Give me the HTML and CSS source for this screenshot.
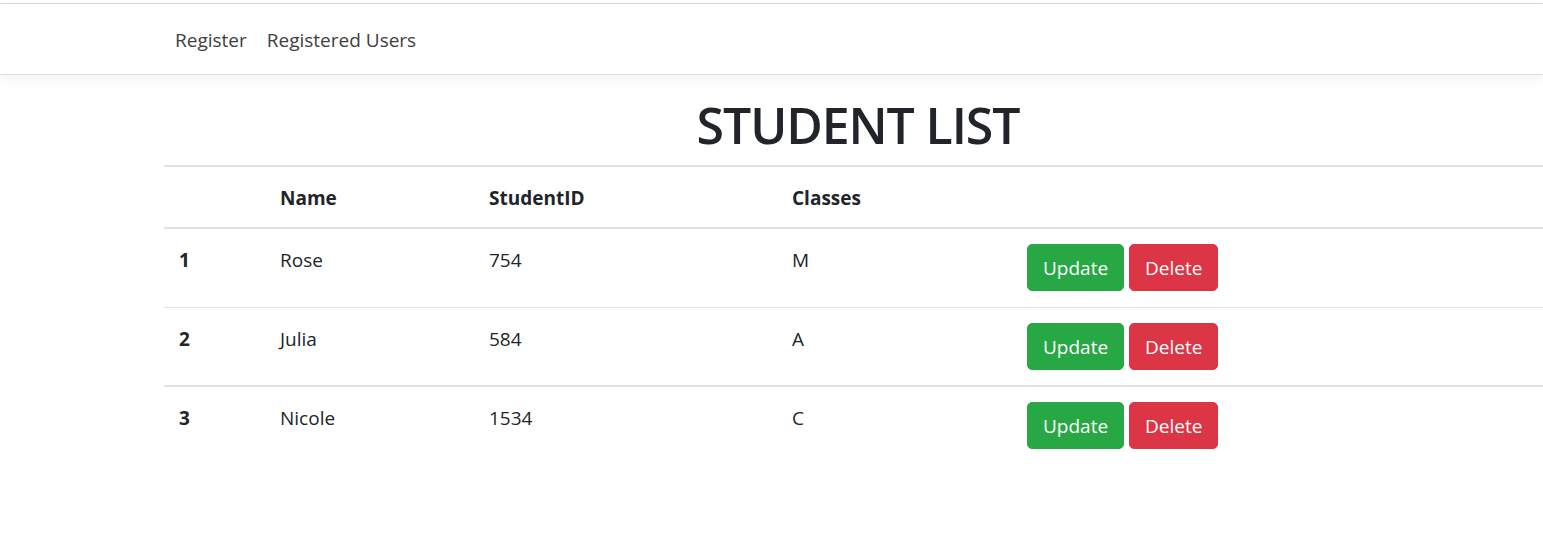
FILE: index.html
```html
<!DOCTYPE html>
<html lang="en">
<head>
<meta charset="utf-8">
<title>Student List</title>
<link rel="stylesheet" href="styles.css">
</head>
<body>
<div class="topline"></div>
<nav class="navbar">
  <ul class="nav">
    <li><a class="nav-link" href="#">Register</a></li>
    <li><a class="nav-link" href="#">Registered Users</a></li>
  </ul>
</nav>
<main class="content">
  <h1 class="title">STUDENT LIST</h1>
  <table class="table">
    <thead>
      <tr>
        <th class="c1"></th>
        <th class="c2">Name</th>
        <th class="c3">StudentID</th>
        <th class="c4">Classes</th>
        <th class="c5"></th>
      </tr>
    </thead>
    <tbody>
      <tr>
        <th>1</th><td>Rose</td><td>754</td><td>M</td>
        <td class="actions"><button class="btn btn-success">Update</button> <button class="btn btn-danger">Delete</button></td>
      </tr>
      <tr>
        <th>2</th><td>Julia</td><td>584</td><td>A</td>
        <td class="actions"><button class="btn btn-success">Update</button> <button class="btn btn-danger">Delete</button></td>
      </tr>
      <tr>
        <th>3</th><td>Nicole</td><td>1534</td><td>C</td>
        <td class="actions"><button class="btn btn-success">Update</button> <button class="btn btn-danger">Delete</button></td>
      </tr>
    </tbody>
  </table>
</main>
</body>
</html>
```

FILE: styles.css
```css
html, body {
  margin: 0;
  padding: 0;
}
body {
  font-family: "Open Sans", "Noto Sans", sans-serif;
  font-size: 19px;
  line-height: 30px;
  color: #212529;
  background: #fff;
  overflow-x: hidden;
}
.topline {
  height: 3px;
  border-bottom: 1px solid #dcdcdc;
}
.navbar {
  border-bottom: 1px solid #e0e0e0;
  box-shadow: 0 5px 15px rgba(0, 0, 0, 0.05);
  display: flex;
  align-items: center;
  padding-left: 165px;
  padding-top: 2px;
  box-sizing: border-box;
  height: 71px;
  position: relative;
}
.nav {
  list-style: none;
  margin: 0;
  padding: 0;
  display: flex;
}
.nav-link {
  display: block;
  padding: 0 10px;
  color: #404040;
  text-decoration: none;
}
.content {
  margin-left: 164px;
  width: 1388px;
  padding-top: 20px;
}
.title {
  margin: 0 0 10px;
  font-size: 50px;
  line-height: 60px;
  font-weight: 600;
  letter-spacing: -1.1px;
  text-align: center;
}
.table {
  width: 100%;
  border-collapse: collapse;
  border-top: 2px solid #dee2e6;
}
.table th, .table td {
  padding: 16px 15px 14px;
  text-align: left;
  vertical-align: top;
}
.table td.actions {
  padding: 15px 15px;
}
.table tbody tr:first-child td.actions {
  padding-bottom: 16px;
}
.table th {
  font-weight: 700;
}
.table thead th {
  border-bottom: 2px solid #dee2e6;
}
.table tbody tr + tr > * {
  border-top: 1px solid #dee2e6;
}
.table tbody tr:nth-child(3) > * {
  border-top-width: 2px;
}
.c1 { width: 71px; }
.c2 { width: 179px; }
.c3 { width: 273px; }
.c4 { width: 205px; }
.btn {
  font-family: inherit;
  font-size: 19px;
  line-height: 30px;
  padding: 7.5px 15px;
  border: 1px solid transparent;
  border-radius: 5px;
  color: #fff;
  cursor: pointer;
  margin: 0;
  vertical-align: top;
}
.btn-success {
  background: #28a745;
  border-color: #28a745;
}
.btn-danger {
  background: #dc3545;
  border-color: #dc3545;
}
```
